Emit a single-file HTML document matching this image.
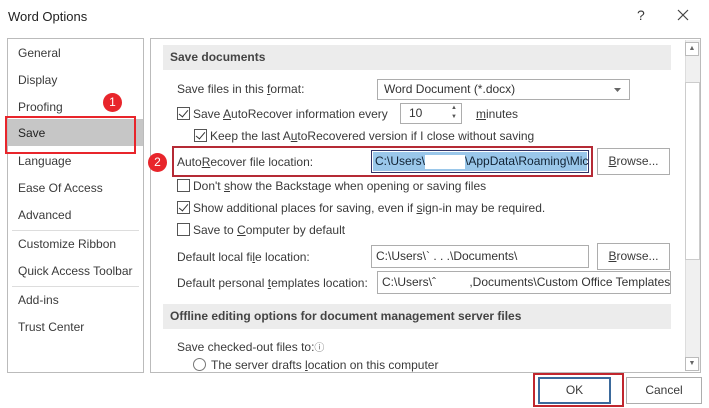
<!DOCTYPE html>
<html><head><style>
*{margin:0;padding:0;box-sizing:border-box}
body{width:709px;height:408px;background:#fff;font-family:"Liberation Sans",sans-serif;font-size:12px;color:#3a3a3a;position:relative;overflow:hidden}
.a{position:absolute;white-space:nowrap}
.nav{left:18px}
.cb{position:absolute;width:13px;height:13px;border:1px solid #555;background:#fff}
.cb.c::after{content:"";position:absolute;left:3px;top:0px;width:4px;height:8px;border:solid #333;border-width:0 1.5px 1.5px 0;transform:rotate(40deg)}
.box{position:absolute;border:1px solid #adadad;background:#fff;padding:3px 4px;font-size:12px;color:#333;white-space:nowrap;overflow:hidden}
.btn{position:absolute;border:1px solid #adadad;background:#fff;text-align:center;line-height:25px}
.hd{position:absolute;left:163px;width:508px;height:25px;background:#ececec;font-weight:bold;color:#444;padding:5px 7px}
.badge{position:absolute;width:19px;height:19px;border-radius:50%;background:#e8252b;color:#fff;font-size:12px;text-align:center;line-height:19px}
</style></head><body>
<div class="a" style="left:8px;top:9px;font-size:13px;color:#222">Word Options</div>
<div class="a" style="left:637px;top:7px;font-size:14px">?</div>
<svg style="position:absolute;left:677px;top:9px" width="12" height="12"><path d="M1 1L11 11M11 1L1 11" stroke="#444" stroke-width="1.2"/></svg>

<div style="position:absolute;left:7px;top:38px;width:137px;height:335px;border:1px solid #bbb"></div>
<div style="position:absolute;left:8px;top:119px;width:135px;height:27px;background:#c6c6c6"></div>
<div style="position:absolute;left:5px;top:116px;width:131px;height:38px;border:2px solid #e8252b"></div>
<div class="a nav" style="top:46px">General</div>
<div class="a nav" style="top:73px">Display</div>
<div class="a nav" style="top:100px">Proofing</div>
<div class="a nav" style="top:126px;color:#222">Save</div>
<div class="a nav" style="top:154px">Language</div>
<div class="a nav" style="top:181px">Ease Of Access</div>
<div class="a nav" style="top:208px">Advanced</div>
<div style="position:absolute;left:12px;top:230px;width:127px;border-top:1px solid #ddd"></div>
<div class="a nav" style="top:237px">Customize Ribbon</div>
<div class="a nav" style="top:264px">Quick Access Toolbar</div>
<div style="position:absolute;left:12px;top:286px;width:127px;border-top:1px solid #ddd"></div>
<div class="a nav" style="top:293px">Add-ins</div>
<div class="a nav" style="top:320px">Trust Center</div>
<div class="badge" style="left:103px;top:93px">1</div>

<div style="position:absolute;left:150px;top:38px;width:551px;height:335px;border:1px solid #bbb"></div>
<div style="position:absolute;left:685px;top:40px;width:15px;height:331px;background:#f0f0f0;border-left:1px solid #ddd"></div>
<div style="position:absolute;left:685px;top:42px;width:14px;height:14px;border:1px solid #bbb;background:#fff;font-size:7px;text-align:center;line-height:12px;color:#666">▲</div>
<div style="position:absolute;left:685px;top:357px;width:14px;height:14px;border:1px solid #bbb;background:#fff;font-size:7px;text-align:center;line-height:12px;color:#666">▼</div>
<div style="position:absolute;left:685px;top:82px;width:15px;height:178px;background:#fff;border:1px solid #ccc"></div>

<div class="hd" style="top:45px">Save documents</div>
<div class="a" style="left:177px;top:82px">Save files in this <u>f</u>ormat:</div>
<div class="box" style="left:377px;top:79px;width:253px;height:21px;padding:2px 6px">Word Document (*.docx)<svg style="position:absolute;right:8px;top:8px" width="7" height="4"><path d="M0 0H7L3.5 4Z" fill="#666"/></svg></div>
<div class="cb c" style="left:177px;top:107px"></div>
<div class="a" style="left:193px;top:107px">Save <u>A</u>utoRecover information every</div>
<div class="box" style="left:400px;top:103px;width:62px;height:21px;padding:2px 8px">10<span style="position:absolute;right:4px;top:0;font-size:6px;line-height:9px;color:#555">▲<br>▼</span></div>
<div class="a" style="left:476px;top:107px"><u>m</u>inutes</div>
<div class="cb c" style="left:194px;top:129px"></div>
<div class="a" style="left:210px;top:129px">Keep the last A<u>u</u>toRecovered version if I close without saving</div>

<div class="badge" style="left:148px;top:153px">2</div>
<div style="position:absolute;left:172px;top:146px;width:421px;height:31px;border:2px solid #b52a35"></div>
<div class="a" style="left:177px;top:155px">Auto<u>R</u>ecover file location:</div>
<div class="box" style="left:371px;top:150px;width:218px;height:23px;padding:0;border-color:#336;"><div style="position:absolute;left:1px;top:1px;right:1px;bottom:1px;background:#9ac7ea;padding:2px 2px;color:#123">C:\Users\<span style="display:inline-block;width:40px;background:#fff;height:14px;vertical-align:middle"></span>\AppData\Roaming\Mic</div></div>
<div class="btn" style="left:597px;top:148px;width:73px;height:27px"><u>B</u>rowse...</div>

<div class="cb" style="left:177px;top:179px"></div>
<div class="a" style="left:193px;top:179px">Don't <u>s</u>how the Backstage when opening or saving files</div>
<div class="cb c" style="left:177px;top:201px"></div>
<div class="a" style="left:193px;top:201px">Show additional places for saving, even if <u>s</u>ign-in may be required.</div>
<div class="cb" style="left:177px;top:223px"></div>
<div class="a" style="left:193px;top:223px">Save to <u>C</u>omputer by default</div>

<div class="a" style="left:177px;top:250px">Default local fi<u>l</u>e location:</div>
<div class="box" style="left:371px;top:245px;width:218px;height:23px">C:\Users\` . . .\Documents\</div>
<div class="btn" style="left:597px;top:243px;width:73px;height:27px"><u>B</u>rowse...</div>
<div class="a" style="left:177px;top:276px">Default personal <u>t</u>emplates location:</div>
<div class="box" style="left:377px;top:271px;width:294px;height:23px">C:\Users\ˆ&nbsp;&nbsp;&nbsp;&nbsp;&nbsp;&nbsp;&nbsp;&nbsp;&nbsp;&nbsp;,Documents\Custom Office Templates\</div>

<div class="hd" style="top:304px">Offline editing options for document management server files</div>
<div class="a" style="left:177px;top:339px">Save checked-out files to:<span style="font-size:10px;color:#666">ⓘ</span></div>
<div style="position:absolute;left:193px;top:358px;width:13px;height:13px;border:1px solid #777;border-radius:50%"></div>
<div class="a" style="left:211px;top:358px">The server drafts <u>l</u>ocation on this computer</div>

<div style="position:absolute;left:533px;top:373px;width:91px;height:34px;border:2px solid #c0262e"></div>
<div class="btn" style="left:538px;top:377px;width:73px;height:27px;border:2px solid #3b6a9c;line-height:23px">OK</div>
<div class="btn" style="left:626px;top:377px;width:76px;height:27px">Cancel</div>
</body></html>
